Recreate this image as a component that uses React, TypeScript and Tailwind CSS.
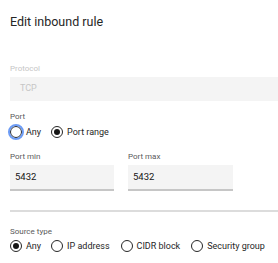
import React from 'react';

const Radio = ({ label, checked, focused, className = '' }: { label: string; checked?: boolean; focused?: boolean; className?: string }) => (
  <div className={`flex items-center shrink-0 whitespace-nowrap ${className}`}>
    <span
      className={`w-[12px] h-[12px] shrink-0 rounded-full border-[1.5px] border-[#262626] flex items-center justify-center ${
        focused ? 'outline-2 outline-[#6d9cf5]' : ''
      }`}
    >
      {checked && <span className="w-[6px] h-[6px] rounded-full bg-[#161616]" />}
    </span>
    <span className="ml-[4px] text-[9px] leading-[12px] text-[#262626]">{label}</span>
  </div>
);

export default function App() {
  return (
    <div className="w-[278px] h-[263px] bg-white pl-[10px] overflow-hidden font-['Roboto',sans-serif]">
      <h2 className="pt-[13px] text-[12.5px] leading-[18px] text-[#262626]">Edit inbound rule</h2>

      {/* Protocol */}
      <div className="mt-[33px] text-[8px] leading-[10px] text-[#c6c6c6]">Protocol</div>
      <div className="mt-[3px] h-[24px] bg-[#f4f4f4] flex items-center pl-[10px] text-[9px] text-[#c6c6c6]">TCP</div>

      {/* Port */}
      <div className="mt-[11px] text-[8px] leading-[10px] text-[#5a5a5a]">Port</div>
      <div className="mt-[4px] flex items-center h-[12px]">
        <Radio label="Any" focused />
        <Radio label="Port range" checked className="ml-[10px]" />
      </div>

      <div className="mt-[14px] flex gap-[14px]">
        <div className="w-[104px]">
          <div className="text-[8px] leading-[10px] text-[#5a5a5a]">Port min</div>
          <div className="mt-[3px] h-[26px] bg-[#f4f4f4] border-b-2 border-[#c6c6c6] flex items-center pl-[5px] text-[9.5px] text-[#161616]">5432</div>
        </div>
        <div className="w-[105px]">
          <div className="text-[8px] leading-[10px] text-[#5a5a5a]">Port max</div>
          <div className="mt-[3px] h-[26px] bg-[#f4f4f4] border-b-2 border-[#c6c6c6] flex items-center pl-[5px] text-[9.5px] text-[#161616]">5432</div>
        </div>
      </div>

      <div className="mt-[19px] h-[2px] bg-[#dcdcdc]" />

      {/* Source type */}
      <div className="mt-[15px] text-[8px] leading-[10px] text-[#5a5a5a]">Source type</div>
      <div className="mt-[3px] flex items-center h-[12px]">
        <Radio label="Any" checked />
        <Radio label="IP address" className="ml-[10px]" />
        <Radio label="CIDR block" className="ml-[11px]" />
        <Radio label="Security group" className="ml-[11px]" />
      </div>
    </div>
  );
}
